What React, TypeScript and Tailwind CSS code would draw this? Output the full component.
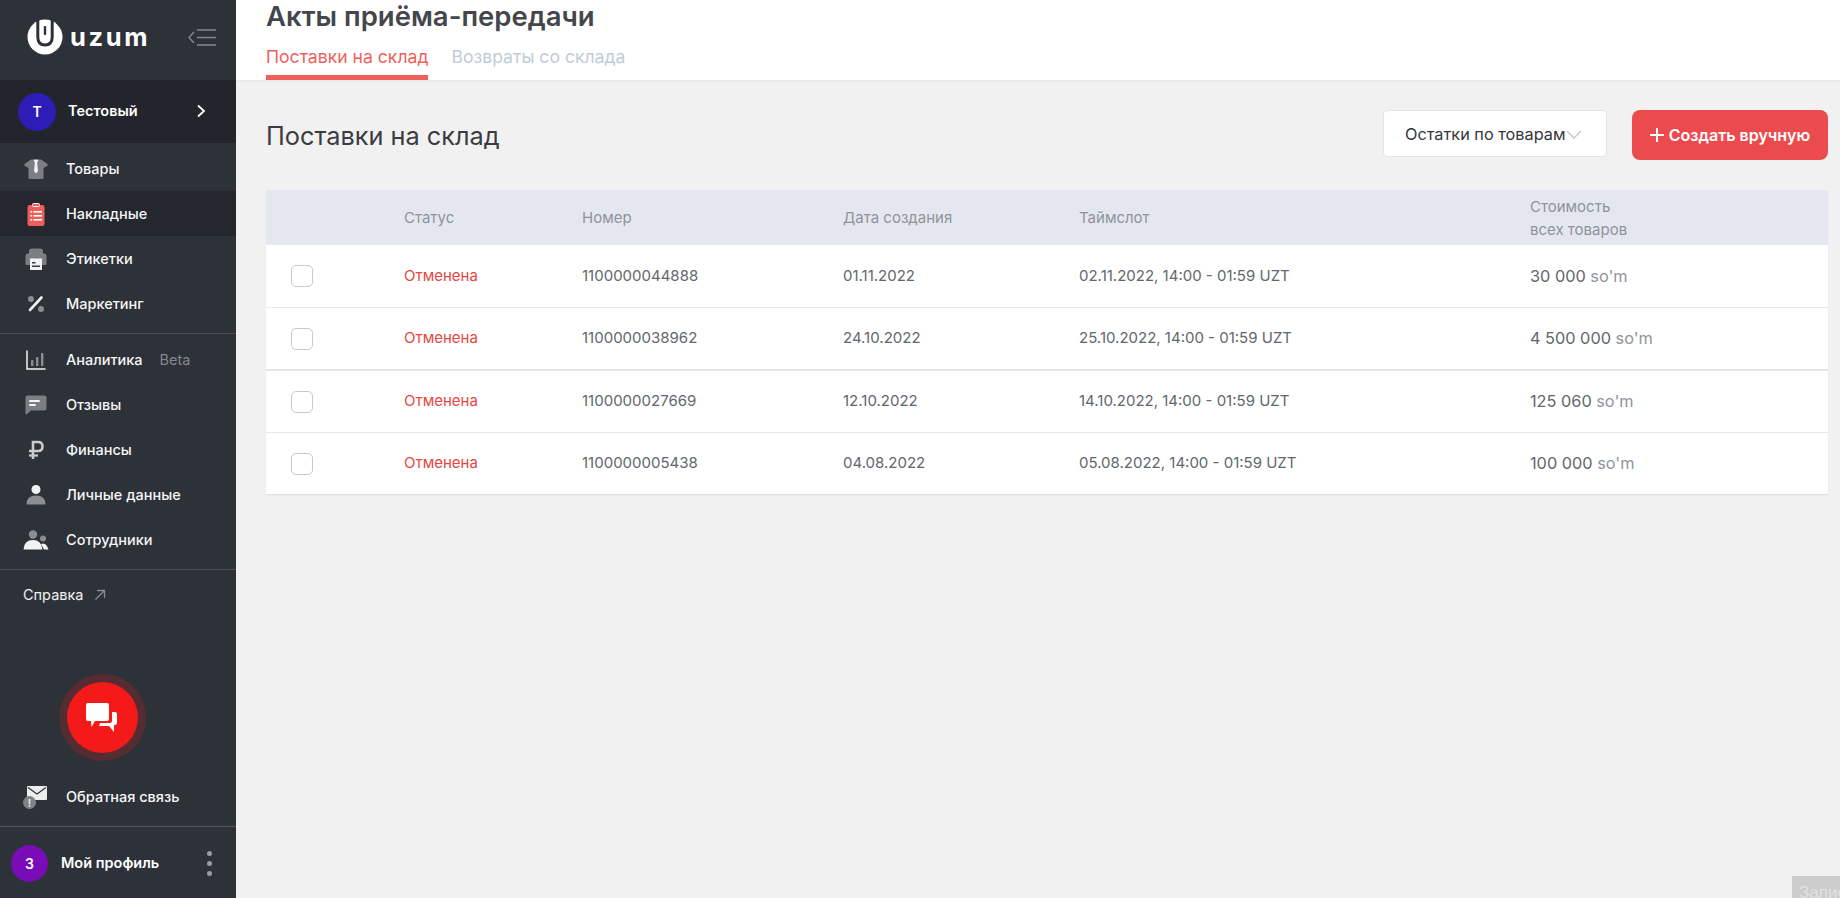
import React from "react";

function ShirtIcon() {
  return (
    <svg width="24" height="20" viewBox="0 0 24 20">
      <path d="M7 0.5 L9 0.5 L12 2 L15 0.5 L17 0.5 L23.5 5 L23.5 7 L19.5 9 L19.5 19 Q19.5 20 18.5 20 L5.5 20 Q4.5 20 4.5 19 L4.5 9 L0.5 7 L0.5 5 Z" fill="#7b7e83" />
      <path d="M9.5 0.5 L14.5 0.5 L13.2 4 L14 12 L12 14.5 L10 12 L10.8 4 Z" fill="#eef0f2" />
    </svg>
  );
}
function ClipboardIcon() {
  return (
    <svg width="18" height="24" viewBox="0 0 18 24">
      <rect x="0.5" y="3" width="17" height="21" rx="2" fill="#ee5f5b" />
      <rect x="5.5" y="1.5" width="7" height="3" rx="1" fill="#ee5f5b" stroke="#f5f5f5" strokeWidth="1" />
      <g fill="#fff">
        <rect x="3.5" y="9" width="1.6" height="1.6" /><rect x="6.5" y="9" width="8.5" height="1.6" />
        <rect x="3.5" y="13" width="1.6" height="1.6" /><rect x="6.5" y="13" width="8.5" height="1.6" />
        <rect x="3.5" y="17" width="1.6" height="1.6" /><rect x="6.5" y="17" width="8.5" height="1.6" />
      </g>
    </svg>
  );
}
function PrinterIcon() {
  return (
    <svg width="22" height="22" viewBox="0 0 22 22">
      <path d="M4 6 V3 Q4 0.5 7 0.5 H15 Q18 0.5 18 3 V6 Z" fill="#7b7e83" />
      <path d="M3 5.5 H19 Q21.5 5.5 21.5 8 V16 Q21.5 17 20.5 17 H1.5 Q0.5 17 0.5 16 V8 Q0.5 5.5 3 5.5 Z" fill="#7b7e83" />
      <rect x="5" y="10.5" width="12" height="11.5" fill="#f2f3f4" />
      <rect x="7" y="14" width="3.5" height="1.5" fill="#3a3d44" />
      <rect x="7" y="17.5" width="8" height="1.5" fill="#3a3d44" />
    </svg>
  );
}
function PercentIcon() {
  return (
    <svg width="18" height="18" viewBox="0 0 18 18">
      <circle cx="4" cy="4" r="3" fill="#8a8d92" />
      <circle cx="14" cy="14" r="3" fill="#8a8d92" />
      <line x1="14.5" y1="2.5" x2="3" y2="15" stroke="#f2f3f4" strokeWidth="2.6" strokeLinecap="round" />
    </svg>
  );
}
function ChartIcon() {
  return (
    <svg width="20" height="20" viewBox="0 0 20 20">
      <path d="M1 0.5 V19 H19.5" fill="none" stroke="#f2f3f4" strokeWidth="1.5" />
      <rect x="5" y="10" width="2.4" height="6" rx="0.6" fill="#8a8d92" />
      <rect x="10" y="7" width="2.4" height="9" rx="0.6" fill="#8a8d92" />
      <rect x="15" y="3" width="2.4" height="13" rx="0.6" fill="#8a8d92" />
    </svg>
  );
}
function CommentIcon() {
  return (
    <svg width="22" height="20" viewBox="0 0 22 20">
      <path d="M2.5 0.5 H19 Q21.5 0.5 21.5 3 V13 Q21.5 15.5 19 15.5 H6 L1.5 19.5 Q0.5 19.5 0.5 18 V3 Q0.5 0.5 2.5 0.5 Z" fill="#7b7e83" />
      <rect x="4" y="5" width="11" height="2" rx="1" fill="#f2f3f4" />
      <rect x="4" y="9" width="7" height="2" rx="1" fill="#f2f3f4" />
    </svg>
  );
}
function RubleIcon() {
  return (
    <svg width="16" height="20" viewBox="0 0 16 20">
      <path d="M5 19 V2 H10 Q14.5 2 14.5 6.5 Q14.5 11 10 11 H1" fill="none" stroke="#c9cacc" strokeWidth="2.6" />
      <line x1="1" y1="15.5" x2="10" y2="15.5" stroke="#c9cacc" strokeWidth="2.2" />
    </svg>
  );
}
function PersonIcon() {
  return (
    <svg width="20" height="20" viewBox="0 0 20 20">
      <circle cx="10" cy="4.5" r="4.5" fill="#f2f3f4" />
      <path d="M0.5 19.5 Q0.5 10.5 10 10.5 Q19.5 10.5 19.5 19.5 Z" fill="#8a8d92" />
    </svg>
  );
}
function PeopleIcon() {
  return (
    <svg width="26" height="20" viewBox="0 0 26 20">
      <circle cx="10" cy="4.5" r="4.2" fill="#8a8d92" />
      <circle cx="20" cy="8.5" r="3" fill="#8a8d92" />
      <path d="M18 14 Q23 11.5 25.5 19.5 H21 Z" fill="#f2f3f4" />
      <path d="M0.5 19.5 Q1 10 10 10 Q18.5 10 19.5 19.5 Z" fill="#f2f3f4" />
    </svg>
  );
}

function NavRow({ icon, label, active, extra }: { icon: React.ReactNode; label: string; active?: boolean; extra?: string }) {
  return (
    <div className={`flex h-[45px] items-center ${active ? "bg-[#24272e]" : ""}`}>
      <div className="flex w-[66px] shrink-0 justify-center pl-[5px]">{icon}</div>
      <span className="text-[14.5px] font-medium text-[#f5f6f7]">{label}</span>
      {extra && <span className="ml-[17px] text-[14.5px] text-[#85878c]">{extra}</span>}
    </div>
  );
}

const rows = [
  { num: "1100000044888", date: "01.11.2022", slot: "02.11.2022, 14:00 - 01:59 UZT", cost: "30 000", h: "h-[63px] border-b border-[#e6e8ec]" },
  { num: "1100000038962", date: "24.10.2022", slot: "25.10.2022, 14:00 - 01:59 UZT", cost: "4 500 000", h: "h-[63px] border-b-2 border-[#e2e5ea]" },
  { num: "1100000027669", date: "12.10.2022", slot: "14.10.2022, 14:00 - 01:59 UZT", cost: "125 060", h: "h-[62px] border-b border-[#e6e8ec]" },
  { num: "1100000005438", date: "04.08.2022", slot: "05.08.2022, 14:00 - 01:59 UZT", cost: "100 000", h: "h-[61px]" },
];

const cols = "grid grid-cols-[138px_178px_261px_236px_451px_1fr] items-center";

export default function App() {
  return (
    <div className="relative flex h-[898px] w-[1840px] overflow-hidden bg-[#f1f1f1] font-['Inter','Noto_Sans',sans-serif]">
      <aside className="flex w-[236px] shrink-0 flex-col bg-[#2d3138]">
        <div className="flex h-[80px] items-center pl-[27px]">
          <svg width="36" height="36" viewBox="0 0 36 36" className="mt-[-6px]">
            <circle cx="18" cy="18" r="17.5" fill="#fff" />
            <path d="M10.8 1 V18 Q10.8 26 18 26 Q25.2 26 25.2 18 V1" fill="none" stroke="#2d3138" strokeWidth="3" />
            <rect x="16.8" y="7" width="2.4" height="9" rx="1" fill="#2d3138" />
          </svg>
          <span className="ml-[7px] mt-[-6px] w-[118px] text-[25.5px] font-bold tracking-[2.6px] text-white">uzum</span>
          <svg width="29" height="17" viewBox="0 0 29 17" className="mt-[-6px]">
            <path d="M6 3 L1 8.5 L6 14" fill="none" stroke="#85888d" strokeWidth="1.4" />
            <path d="M9 1 H28 M9 8.5 H28 M9 16 H28" stroke="#85888d" strokeWidth="1.6" />
          </svg>
        </div>
        <div className="flex h-[63px] items-center bg-[#22252c] pl-[18px]">
          <div className="flex h-[38px] w-[38px] items-center justify-center rounded-full bg-[#2d1cb8] text-[14px] font-semibold text-white">Т</div>
          <span className="ml-[12px] mt-[-2px] w-[128px] text-[14.5px] font-semibold text-white">Тестовый</span>
          <svg width="10" height="14" viewBox="0 0 10 14" className="mt-[-2px]">
            <path d="M2 1.5 L8 7 L2 12.5" fill="none" stroke="#fff" strokeWidth="1.8" />
          </svg>
        </div>
        <div className="pt-[3px] pb-[7px]">
          <NavRow icon={<ShirtIcon />} label="Товары" />
          <NavRow icon={<ClipboardIcon />} label="Накладные" active />
          <NavRow icon={<PrinterIcon />} label="Этикетки" />
          <NavRow icon={<PercentIcon />} label="Маркетинг" />
        </div>
        <div className="h-px bg-[#4a4d54]" />
        <div className="pt-[3px] pb-[7px]">
          <NavRow icon={<ChartIcon />} label="Аналитика" extra="Beta" />
          <NavRow icon={<CommentIcon />} label="Отзывы" />
          <NavRow icon={<RubleIcon />} label="Финансы" />
          <NavRow icon={<PersonIcon />} label="Личные данные" />
          <NavRow icon={<PeopleIcon />} label="Сотрудники" />
        </div>
        <div className="h-px bg-[#4a4d54]" />
        <div className="flex h-[49px] items-center pl-[23px]">
          <span className="text-[14.5px] text-[#f0f1f2]">Справка</span>
          <svg width="12" height="12" viewBox="0 0 12 12" className="ml-[11px]">
            <path d="M1.5 10.5 L10 2 M3 1.5 H10.5 V9" fill="none" stroke="#8a8d92" strokeWidth="1.3" />
          </svg>
        </div>
        <div className="flex flex-1 items-start justify-center pt-[63px]">
          <div className="mr-[32px] flex h-[71px] w-[71px] items-center justify-center rounded-full bg-[#f41a1a] shadow-[0_0_0_8px_#542c32]">
            <svg width="32" height="30" viewBox="0 0 32 30">
              <path d="M2 0 H21 Q23 0 23 2 V16 Q23 18 21 18 H9 L5.5 24 L5 18 H2 Q0 18 0 16 V2 Q0 0 2 0 Z" fill="#fff" />
              <path d="M26 9 H29 Q31 9 31 11 V20 Q31 22 29 22 H28 L28 29 L23 23 H13 L14 20 H24 Q26 20 26 18 Z" fill="#fff" />
            </svg>
          </div>
        </div>
        <div className="flex h-[40px] items-center">
          <div className="flex w-[66px] shrink-0 pl-[23px]">
            <div className="relative h-[22px] w-[26px]">
              <svg width="20" height="14" viewBox="0 0 20 14" className="absolute left-[4px] top-[0px]">
                <rect width="20" height="14" rx="1" fill="#eceded" />
                <path d="M1 1.5 L10 8 L19 1.5" fill="none" stroke="#2d3138" strokeWidth="1.2" />
              </svg>
              <div className="absolute bottom-[-1px] left-0 flex h-[13px] w-[13px] items-center justify-center rounded-full bg-[#7f8287] text-[10px] font-bold leading-none text-[#e9eaeb]">!</div>
            </div>
          </div>
          <span className="text-[14.5px] font-medium text-[#f5f6f7]">Обратная связь</span>
        </div>
        <div className="mt-[9px] h-px bg-[#54575d]" />
        <div className="flex h-[71px] items-center pl-[11px] pt-[1px]">
          <div className="flex h-[37px] w-[37px] items-center justify-center rounded-full bg-[#7a0cb8] text-[14px] font-semibold text-white">З</div>
          <span className="ml-[13px] w-[146px] text-[14.5px] font-semibold text-white">Мой профиль</span>
          <div className="flex flex-col gap-[5px]">
            <div className="h-[5px] w-[5px] rounded-full bg-[#9a9ca0]" />
            <div className="h-[5px] w-[5px] rounded-full bg-[#9a9ca0]" />
            <div className="h-[5px] w-[5px] rounded-full bg-[#9a9ca0]" />
          </div>
        </div>
      </aside>

      <main className="flex min-w-0 flex-1 flex-col">
        <header className="flex h-[80px] flex-col justify-between bg-white px-[30px] shadow-[0_1px_2px_rgba(0,0,0,0.06)]">
          <h1 className="mt-[-1px] text-[27.5px] font-semibold leading-[34px] text-[#44464c]">Акты приёма-передачи</h1>
          <div className="flex gap-[23px] text-[17.6px]">
            <div className="h-[35px] border-b-[5px] border-[#ef5f5b] pt-[2px] leading-[20px] text-[#ef5f5b]">Поставки на склад</div>
            <div className="pt-[2px] leading-[20px] text-[#bfccd9]">Возвраты со склада</div>
          </div>
        </header>
        <div className="px-[30px] pr-[12px]">
          <div className="flex h-[110px] items-center">
            <h2 className="mt-[2px] flex-1 text-[25.3px] font-normal text-[#3a3c40]">Поставки на склад</h2>
            <button className="mt-[-3px] flex h-[47px] w-[224px] items-center rounded-[4px] border border-[#e5e5e5] bg-white pl-[21px] pt-[1px] text-[16.3px] text-[#34363c]">
              Остатки по товарам
              <svg width="16" height="9" viewBox="0 0 16 9" className="ml-[1px]">
                <path d="M1 1 L8 8 L15 1" fill="none" stroke="#bcc7d0" strokeWidth="1.4" />
              </svg>
            </button>
            <button className="ml-[25px] flex h-[50px] w-[196px] items-center justify-center rounded-[8px] bg-[#ec4b4e] text-[16px] font-semibold text-white">
              <span className="mr-[5px] h-[14px] w-[14px] bg-[linear-gradient(#fff,#fff),linear-gradient(#fff,#fff)] bg-[length:14px_2px,2px_14px] bg-center bg-no-repeat" />
              Создать вручную
            </button>
          </div>
          <div className="bg-white shadow-[0_1px_1px_rgba(0,0,0,0.08)]">
            <div className={`${cols} h-[55px] bg-[#e4e7ef] text-[15px] leading-[23px] text-[#8f939b]`}>
              <div />
              <div>Статус</div>
              <div>Номер</div>
              <div>Дата создания</div>
              <div>Таймслот</div>
              <div>Стоимость<br />всех товаров</div>
            </div>
            {rows.map((r) => (
              <div key={r.num} className={`${cols} ${r.h} text-[15px] text-[#62666d]`}>
                <div className="pl-[25px]">
                  <div className="h-[22px] w-[22px] rounded-[5px] border border-[#c6c9d2] bg-white" />
                </div>
                <div className="text-[#e6473f]">Отменена</div>
                <div>{r.num}</div>
                <div>{r.date}</div>
                <div>{r.slot}</div>
                <div className="text-[16.3px]">
                  {r.cost} <span className="text-[#8f939b]">so'm</span>
                </div>
              </div>
            ))}
          </div>
        </div>
      </main>

      <div className="absolute bottom-0 right-0 h-[22px] w-[48px] overflow-hidden bg-[#cccccc] pl-[7px] pt-[7px] font-['Liberation_Sans',sans-serif] text-[17px] leading-[20px] whitespace-nowrap text-[#e2e2e2]">
        Запись
      </div>
    </div>
  );
}
